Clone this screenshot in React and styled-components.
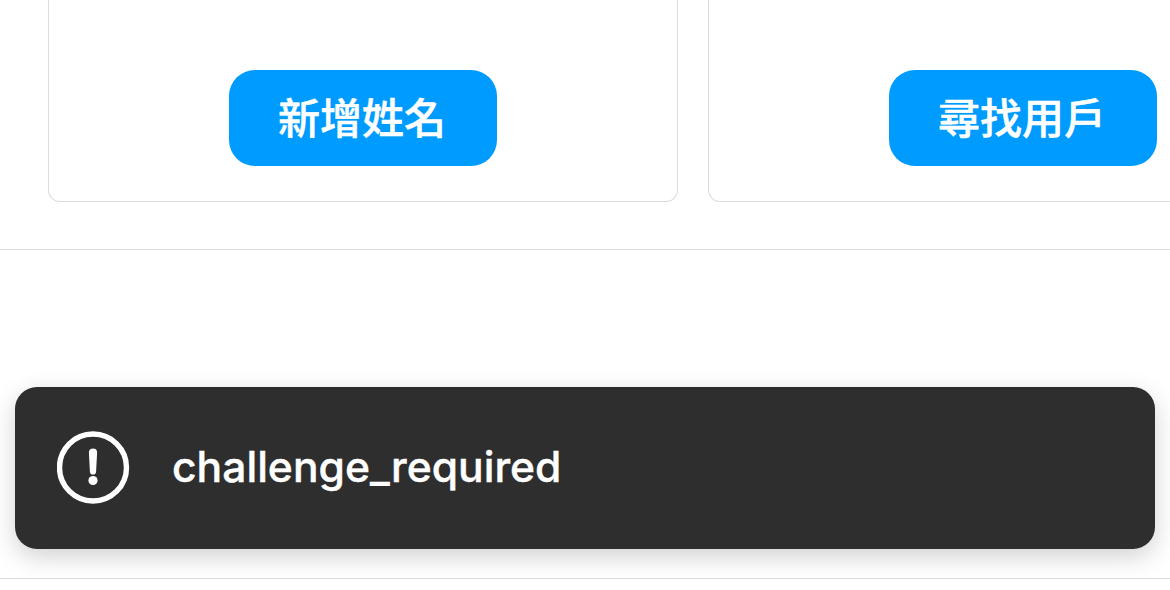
import React from 'react';
import styled, { createGlobalStyle } from 'styled-components';

const GlobalStyle = createGlobalStyle`
  html, body {
    margin: 0;
    padding: 0;
    background: #fff;
    overflow: hidden;
  }
`;

const Page = styled.div`
  width: 1170px;
  height: 590px;
  overflow: hidden;
  background: #fff;
  font-family: "Inter", "Noto Sans CJK TC", sans-serif;
`;

const CardSection = styled.section`
  display: flex;
  gap: 30px;
  height: 250px;
  padding-left: 48px;
  box-sizing: border-box;
  border-bottom: 1px solid #dbdbdb;
`;

const Card = styled.div`
  flex: 0 0 630px;
  height: 202px;
  box-sizing: border-box;
  border: 1px solid #dbdbdb;
  border-top: none;
  border-radius: 0 0 12px 12px;
  display: flex;
  justify-content: center;
  padding-top: 70px;
`;

const ActionButton = styled.button`
  width: 268px;
  height: 96px;
  padding: 0 2px 6px 0;
  border: none;
  border-radius: 26px;
  background: #009bfe;
  color: #fff;
  font-family: "Noto Sans CJK TC", sans-serif;
  font-size: 42px;
  font-weight: 500;
  -webkit-text-stroke: 0.5px #fff;
`;

const Spacer = styled.div`
  height: 137px;
`;

const Toast = styled.div`
  margin: 0 15px;
  height: 162px;
  border-radius: 22px;
  background: #2e2e2e;
  box-shadow: 0 8px 24px rgba(0, 0, 0, 0.18);
  display: flex;
  align-items: center;
  gap: 41px;
  padding-left: 42px;
  color: #fff;
  font-size: 42.6px;
  font-weight: 500;
`;

const ToastText = styled.span`
  padding-bottom: 3px;
  -webkit-text-stroke: 0.4px #fff;
`;

const BottomRule = styled.div`
  margin-top: 29px;
  border-top: 1px solid #dbdbdb;
`;

const AlertIcon = () => (
  <svg width="74" height="74" viewBox="0 0 74 74" fill="none">
    <circle cx="36" cy="36.5" r="33.5" stroke="#fff" strokeWidth="5.4" />
    <path d="M32.6 21.5a3.4 3.4 0 0 1 6.8 0l-1 19a2.4 2.4 0 0 1-4.8 0z" fill="#fff" stroke="#fff" strokeWidth="1.4" strokeLinejoin="round" />
    <circle cx="36" cy="49.5" r="4.6" fill="#fff" />
  </svg>
);

export default function App() {
  return (
    <Page>
      <GlobalStyle />
      <CardSection>
        <Card><ActionButton>新增姓名</ActionButton></Card>
        <Card><ActionButton>尋找用戶</ActionButton></Card>
      </CardSection>
      <Spacer />
      <Toast>
        <AlertIcon />
        <ToastText>challenge_required</ToastText>
      </Toast>
      <BottomRule />
    </Page>
  );
}
